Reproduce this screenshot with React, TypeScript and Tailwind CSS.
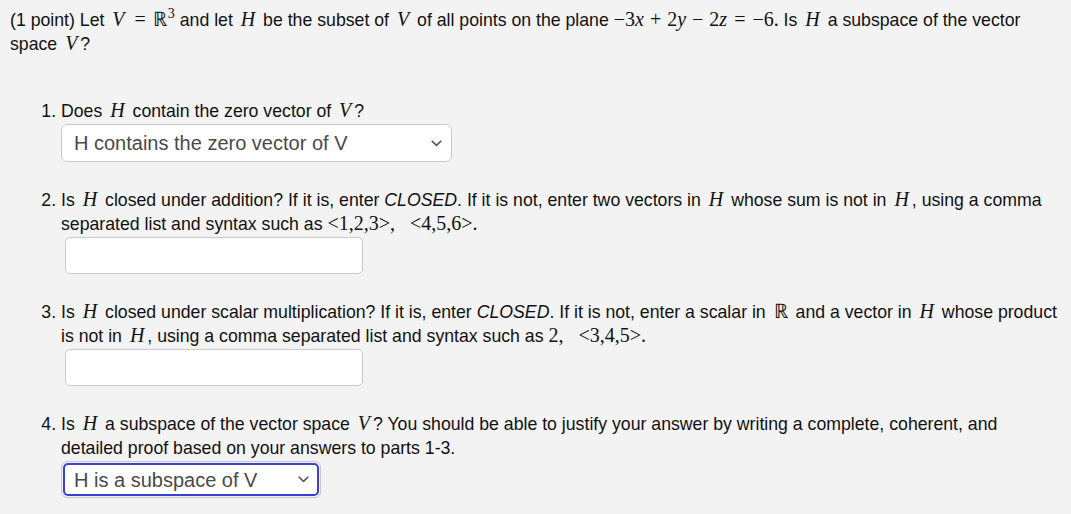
import React from 'react';

const sans = { fontFamily: '"Liberation Sans", Arial, sans-serif' };
const serif = { fontFamily: '"Liberation Serif", "Times New Roman", serif' };

// math bits, set in a Times-like face
function M({ children, italic = true, pad = true }: { children: React.ReactNode; italic?: boolean; pad?: boolean }) {
  return (
    <span
      className={`text-[20px] leading-[14px] ${italic ? 'italic' : ''} ${pad ? 'px-[3px]' : ''}`}
      style={serif}
    >
      {children}
    </span>
  );
}

// operator with math spacing around it
function Op({ children, wide }: { children: React.ReactNode; wide?: boolean }) {
  return (
    <span className={`text-[20px] leading-[14px] ${wide ? 'mx-[7px]' : 'mx-[6px]'}`} style={serif}>
      {children}
    </span>
  );
}

function Chevron() {
  return (
    <svg width="11" height="7" viewBox="0 0 11 7" fill="none" className="shrink-0">
      <path d="M1.2 1.2 L5.5 5.4 L9.8 1.2" stroke="#555" strokeWidth="1.6" strokeLinecap="round" strokeLinejoin="round" />
    </svg>
  );
}

function FakeSelect({ value, width, focused }: { value: string; width: string; focused?: boolean }) {
  if (focused) {
    return (
      <div className={`mt-px ${width} rounded-[6px] border border-[#c8c8c8] p-px bg-[#f3f3f3]`}>
        <div className="h-[33px] rounded-[5px] border-2 border-[#3a3ed2] bg-white flex items-center justify-between pl-[9px] pr-[8px]">
          <span className="text-[20px] text-[#4a4a4a]">{value}</span>
          <Chevron />
        </div>
      </div>
    );
  }
  return (
    <div className={`mt-px ${width} h-[38px] rounded-[6px] border border-[#c9c9c9] bg-white flex items-center justify-between pl-[12px] pr-[9px]`}>
      <span className="text-[20px] text-[#4a4a4a]">{value}</span>
      <Chevron />
    </div>
  );
}

function TextBox() {
  return (
    <div className="mt-px ml-[4px] w-[298px] h-[37px] rounded-[5px] border border-[#c9c9c9] bg-white" />
  );
}

export default function App() {
  return (
    <div className="min-h-screen bg-[#f3f3f3] text-[#111] text-[17.7px] leading-[24px] pl-[10px] pr-[4px] pt-[8px] whitespace-nowrap" style={sans}>
      <p>
        (1 point) Let <M>V</M><Op wide>=</Op><M italic={false} pad={false}>ℝ<span className="text-[14px] relative -top-[8px] ml-px">3</span></M> and let <M>H</M> be the subset of <M>V</M> of all points on the plane{' '}
        <M italic={false} pad={false}>−3</M><M pad={false}>x</M><Op>+</Op><M italic={false} pad={false}>2</M><M pad={false}>y</M><Op>−</Op><M italic={false} pad={false}>2</M><M pad={false}>z</M><Op wide>=</Op><M italic={false} pad={false}>−6.</M> Is <M>H</M> a subspace of the vector
        <br />
        space <M>V</M>?
      </p>

      <ol className="list-decimal pl-[51px] mt-[43px]">
        <li className="mb-[26px]">
          <div>Does <M>H</M> contain the zero vector of <M>V</M>?</div>
          <FakeSelect value="H contains the zero vector of V" width="w-[391px]" />
        </li>
        <li className="mb-[26px]">
          <div>
            Is <M>H</M> closed under addition? If it is, enter <i>CLOSED</i>. If it is not, enter two vectors in <M>H</M> whose sum is not in <M>H</M>, using a comma
            <br />
            separated list and syntax such as <M italic={false} pad={false}>&lt;1,2,3&gt;,&nbsp;&nbsp;&nbsp;&lt;4,5,6&gt;.</M>
          </div>
          <TextBox />
        </li>
        <li className="mb-[26px]">
          <div>
            Is <M>H</M> closed under scalar multiplication? If it is, enter <i>CLOSED</i>. If it is not, enter a scalar in <M italic={false}>ℝ</M> and a vector in <M>H</M> whose product
            <br />
            is not in <M>H</M>, using a comma separated list and syntax such as <M italic={false} pad={false}>2,&nbsp;&nbsp;&nbsp;&lt;3,4,5&gt;.</M>
          </div>
          <TextBox />
        </li>
        <li>
          <div>
            Is <M>H</M> a subspace of the vector space <M>V</M>? You should be able to justify your answer by writing a complete, coherent, and
            <br />
            detailed proof based on your answers to parts 1-3.
          </div>
          <FakeSelect value="H is a subspace of V" width="w-[260px]" focused />
        </li>
      </ol>
    </div>
  );
}
